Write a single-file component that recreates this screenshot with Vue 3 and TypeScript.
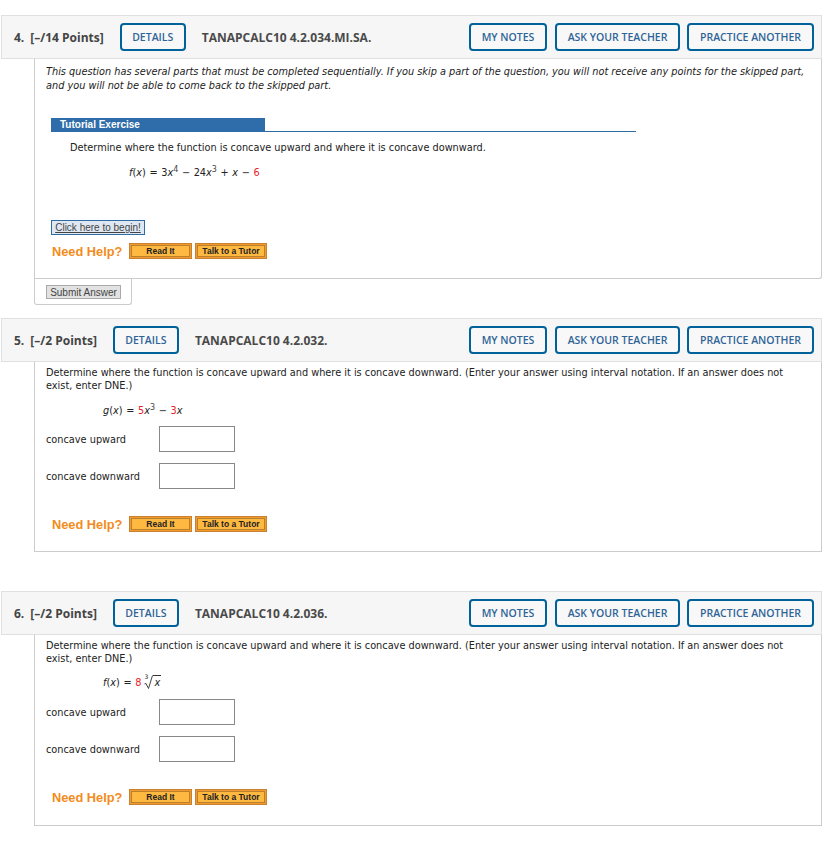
<script setup lang="ts">
const actions = ["MY NOTES", "ASK YOUR TEACHER", "PRACTICE ANOTHER"];
const blanks = ["concave upward", "concave downward"];
</script>

<template>
  <div class="page">
    <section class="question q4">
      <header class="head">
        <span class="num">4.</span>
        <span class="points">[–/14 Points]</span>
        <button class="btn details">DETAILS</button>
        <span class="code">TANAPCALC10 4.2.034.MI.SA.</span>
        <div class="actions">
          <button v-for="a in actions" :key="a" class="btn">{{ a }}</button>
        </div>
      </header>
      <div class="body">
        <p class="intro">
          <em>This question has several parts that must be completed sequentially. If you skip a part of the question, you will not receive any points for the skipped part, and you will not be able to come back to the skipped part.</em>
        </p>
        <div class="tutorial"><span>Tutorial Exercise</span></div>
        <p class="tut-text">Determine where the function is concave upward and where it is concave downward.</p>
        <p class="math tut-math">
          <i>f</i>(<i>x</i>) = 3<i>x</i><sup>4</sup> − 24<i>x</i><sup>3</sup> + <i>x</i> − <b>6</b>
        </p>
        <button class="begin">Click here to begin!</button>
        <div class="help first">
          <span class="need">Need Help?</span>
          <button class="tool read">Read It</button>
          <button class="tool talk">Talk to a Tutor</button>
        </div>
      </div>
      <div class="submit-box"><button class="submit">Submit Answer</button></div>
    </section>

    <section class="question q5">
      <header class="head">
        <span class="num">5.</span>
        <span class="points">[–/2 Points]</span>
        <button class="btn details">DETAILS</button>
        <span class="code">TANAPCALC10 4.2.032.</span>
        <div class="actions">
          <button v-for="a in actions" :key="a" class="btn">{{ a }}</button>
        </div>
      </header>
      <div class="body">
        <p class="intro">Determine where the function is concave upward and where it is concave downward. (Enter your answer using interval notation. If an answer does not exist, enter DNE.)</p>
        <p class="math">
          <i>g</i>(<i>x</i>) = <b>5</b><i>x</i><sup>3</sup> − <b>3</b><i>x</i>
        </p>
        <div v-for="b in blanks" :key="b" class="blank">
          <label>{{ b }}</label>
          <input type="text" />
        </div>
        <div class="help">
          <span class="need">Need Help?</span>
          <button class="tool read">Read It</button>
          <button class="tool talk">Talk to a Tutor</button>
        </div>
      </div>
    </section>

    <section class="question q6">
      <header class="head">
        <span class="num">6.</span>
        <span class="points">[–/2 Points]</span>
        <button class="btn details">DETAILS</button>
        <span class="code">TANAPCALC10 4.2.036.</span>
        <div class="actions">
          <button v-for="a in actions" :key="a" class="btn">{{ a }}</button>
        </div>
      </header>
      <div class="body">
        <p class="intro">Determine where the function is concave upward and where it is concave downward. (Enter your answer using interval notation. If an answer does not exist, enter DNE.)</p>
        <p class="math rooted">
          <i>f</i>(<i>x</i>) = <b>8</b>
          <span class="root">
            <small>3</small>
            <svg width="9" height="14" viewBox="0 0 9 14"><path d="M0.5 9 L2 8.5 L4.5 13.5 L8.5 0.5" fill="none" stroke="#444" stroke-width="1" /></svg>
            <i class="radicand">x</i>
          </span>
        </p>
        <div v-for="b in blanks" :key="b" class="blank">
          <label>{{ b }}</label>
          <input type="text" />
        </div>
        <div class="help">
          <span class="need">Need Help?</span>
          <button class="tool read">Read It</button>
          <button class="tool talk">Talk to a Tutor</button>
        </div>
      </div>
    </section>
  </div>
</template>

<style>
html,
body {
  margin: 0;
  background: #fff;
}
</style>

<style scoped>
.page {
  width: 829px;
  height: 853px;
  overflow: hidden;
  padding-top: 15px;
  box-sizing: border-box;
  font-family: "DejaVu Sans", Verdana, sans-serif;
  font-size: 9.75px;
  color: #222;
}

.question {
  width: 821px;
  margin-left: 1px;
}
.q5 {
  margin-top: 13px;
}
.q6 {
  margin-top: 39px;
}

.head {
  display: flex;
  align-items: center;
  height: 44px;
  box-sizing: border-box;
  padding: 0 7px 0 12px;
  background: #f6f6f6;
  border: 1px solid #e0e0e0;
  font-family: "Open Sans", sans-serif;
  font-weight: 600;
  font-size: 12px;
  color: #444;
}
.num {
  font-weight: 700;
  margin-right: 6px;
}
.points {
  font-weight: 700;
}
.details {
  width: 66px;
  padding: 0;
  margin: 0 16px;
}
.code {
  font-weight: 700;
  color: #4a4a4a;
  font-size: 12px;
}
.actions {
  display: flex;
  margin-left: auto;
}
.btn {
  height: 28px;
  padding: 0;
  box-sizing: border-box;
  background: #f8f8f8;
  border: 2px solid #00629b;
  border-radius: 4px;
  font-family: "Open Sans", sans-serif;
  font-size: 10.5px;
  font-weight: 600;
  color: #2f6497;
}
.actions .btn:nth-child(1) {
  width: 78px;
  margin-right: 8px;
}
.actions .btn:nth-child(2) {
  width: 125px;
  margin-right: 7px;
}
.actions .btn:nth-child(3) {
  width: 127px;
}

.body {
  margin-left: 33px;
  padding: 4px 11px 0;
  box-sizing: border-box;
  border-left: 1px solid #ccc;
  border-right: 1px solid #ccc;
  border-bottom: 1px solid #ccc;
}
.q4 .body {
  height: 220px;
  padding-top: 6px;
  border-radius: 0 0 3px 0;
}
.q5 .body {
  height: 190px;
}
.q6 .body {
  height: 191px;
}

.intro {
  margin: 0;
  line-height: 13px;
  width: 750px;
}
.q4 .intro {
  width: 770px;
  line-height: 14px;
}
.tutorial {
  margin: 25px 0 0 5px;
  width: 585px;
  height: 14px;
  border-bottom: 1px solid #2e6da4;
  box-sizing: border-box;
}
.tutorial span {
  display: block;
  width: 214px;
  height: 14px;
  box-sizing: border-box;
  padding-left: 9px;
  background: #2e6da9;
  color: #fff;
  font: bold 10px/14px "Liberation Sans", Arial, sans-serif;
}
.tut-text {
  margin: 9px 0 0 24px;
  line-height: 13px;
}
.math {
  margin: 12px 0 0 57px;
  height: 14px;
  line-height: 14px;
  word-spacing: 0.5px;
  white-space: pre-wrap;
}
.tut-math {
  margin-left: 83px;
}
.rooted {
  margin-top: 10px;
  height: 16px;
}
.math b {
  font-weight: 400;
  color: #e8212b;
}
.math sup {
  font-size: 8px;
  line-height: 0;
  color: #444;
}
.root {
  display: inline-flex;
  align-items: flex-end;
  position: relative;
  vertical-align: -3px;
  height: 14px;
  margin-left: 3px;
}
.root small {
  position: absolute;
  left: 0;
  top: -1px;
  font-size: 6px;
  line-height: 6px;
}
.root svg {
  display: block;
}
.radicand {
  display: block;
  border-top: 1px solid #333;
  height: 13px;
  line-height: 13px;
  padding: 0 1px;
}

.begin {
  display: block;
  margin: 40px 0 0 5px;
  width: 94px;
  height: 15px;
  padding: 0;
  background: #dfe8f2;
  border: 1px solid #2e6da4;
  color: #444;
  font: 10px "Liberation Sans", Arial, sans-serif;
  text-decoration: underline;
}
.help {
  display: flex;
  align-items: center;
  margin: 27px 0 0 6px;
  height: 16px;
}
.help.first {
  margin-top: 8px;
}
.need {
  width: 77px;
  font: bold 12.8px "Liberation Sans", Arial, sans-serif;
  color: #f28c1c;
}
.tool {
  height: 16px;
  padding: 0;
  box-sizing: border-box;
  background: #ffb940;
  border: 1px solid #c8812f;
  box-shadow: inset 0 0 0 1px #f5992a, inset 0 0 0 2px #b8802f;
  font: bold 8.5px "Liberation Sans", Arial, sans-serif;
  color: #222;
}
.read {
  width: 63px;
}
.talk {
  width: 72px;
  margin-left: 3px;
}

.blank {
  display: flex;
  align-items: center;
  height: 26px;
  margin-top: 8px;
}
.blank + .blank {
  margin-top: 11px;
}
.blank label {
  width: 113px;
}
.blank input {
  width: 76px;
  height: 26px;
  padding: 0;
  box-sizing: border-box;
  border: 1px solid #888;
  background: #fff;
}

.submit-box {
  margin-left: 33px;
  width: 98px;
  height: 26px;
  box-sizing: border-box;
  padding: 6px 0 0 11px;
  border-left: 1px solid #ccc;
  border-right: 1px solid #ccc;
  border-bottom: 1px solid #ccc;
  border-radius: 0 0 3px 3px;
}
.submit {
  display: block;
  width: 75px;
  height: 14px;
  padding: 0;
  background: #e2e2e2;
  border: 1px solid #aaa;
  color: #444;
  font: 10px "Liberation Sans", Arial, sans-serif;
}
</style>
